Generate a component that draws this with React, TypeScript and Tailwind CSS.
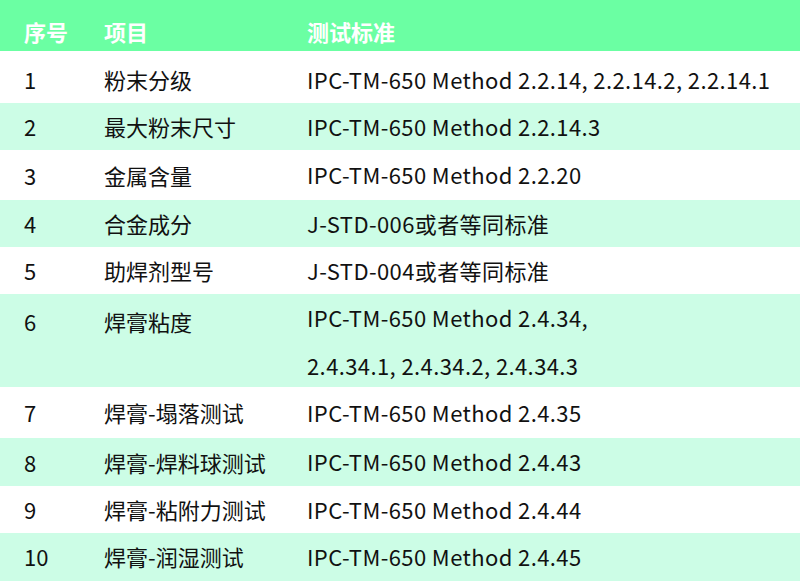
type Row = {
  no: string;
  item: string;
  std: string[];
  h: string;
  tint: boolean;
  pad?: string;
};

const rows: Row[] = [
  { no: "1", item: "粉末分级", std: ["IPC-TM-650 Method 2.2.14, 2.2.14.2, 2.2.14.1"], h: "h-[52px]", tint: false, pad: "pt-[5px]" },
  { no: "2", item: "最大粉末尺寸", std: ["IPC-TM-650 Method 2.2.14.3"], h: "h-[47px]", tint: true },
  { no: "3", item: "金属含量", std: ["IPC-TM-650 Method 2.2.20"], h: "h-[50px]", tint: false },
  { no: "4", item: "合金成分", std: ["J-STD-006或者等同标准"], h: "h-[47px]", tint: true },
  { no: "5", item: "助焊剂型号", std: ["J-STD-004或者等同标准"], h: "h-[47px]", tint: false },
  { no: "6", item: "焊膏粘度", std: ["IPC-TM-650 Method 2.4.34,", "2.4.34.1, 2.4.34.2, 2.4.34.3"], h: "h-[93px]", tint: true },
  { no: "7", item: "焊膏-塌落测试", std: ["IPC-TM-650 Method 2.4.35"], h: "h-[51px]", tint: false },
  { no: "8", item: "焊膏-焊料球测试", std: ["IPC-TM-650 Method 2.4.43"], h: "h-[48px]", tint: true },
  { no: "9", item: "焊膏-粘附力测试", std: ["IPC-TM-650 Method 2.4.44"], h: "h-[47px]", tint: false },
  { no: "10", item: "焊膏-润湿测试", std: ["IPC-TM-650 Method 2.4.45"], h: "h-[48px]", tint: true, pad: "pb-[2px]" },
];

export default function App() {
  return (
    <div className="w-[800px] h-[581px] overflow-hidden bg-white text-[#111111] font-['Noto_Sans_CJK_SC','Noto_Sans',sans-serif] text-[22px]">
      {/* header */}
      <div className="grid grid-cols-[104px_203px_1fr] h-[51px] bg-[#6bffa3] text-white font-bold leading-[28px] pt-[17px]">
        <div className="pl-6">序号</div>
        <div>项目</div>
        <div>测试标准</div>
      </div>

      {rows.map((r) => (
        <div
          key={r.no}
          className={`grid grid-cols-[104px_203px_1fr] items-center ${r.h} ${r.tint ? "bg-[#ccfde6]" : "bg-white"} ${r.pad ?? ""}`}
        >
          <div className="pl-6 self-start flex items-center h-full">
            <span className={r.std.length > 1 ? "self-start pt-[11px]" : ""}>{r.no}</span>
          </div>
          <div className="self-start flex items-center h-full">
            <span className={r.std.length > 1 ? "self-start pt-[11px]" : ""}>{r.item}</span>
          </div>
          <div className="flex flex-col leading-[47.5px] whitespace-nowrap tracking-[0.4px]">
            {r.std.map((s) => (
              <span key={s}>{s}</span>
            ))}
          </div>
        </div>
      ))}
    </div>
  );
}
